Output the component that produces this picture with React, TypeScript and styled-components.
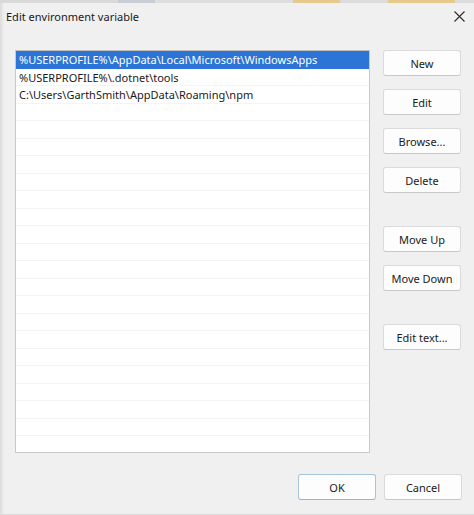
import React from "react";
import styled, { createGlobalStyle } from "styled-components";

const Global = createGlobalStyle`
  html, body { margin: 0; padding: 0; background: #f0f0f0; }
  body { font-family: "Noto Sans", "Open Sans", sans-serif; }
  * { box-sizing: border-box; }
`;

const Screen = styled.div`
  width: 474px;
  height: 515px;
  display: flex;
  flex-direction: column;
  overflow: hidden;
  background: #f0f0f0;
`;

const BackStrip = styled.div`
  height: 3px;
  display: flex;
  background: #d8d8d8;
`;

const StripPart = styled.div<{ $w: number; $c: string }>`
  width: ${(p) => p.$w}px;
  background: ${(p) => p.$c};
`;

const Dialog = styled.div`
  flex: 1;
  display: flex;
  flex-direction: column;
  background: #f0f0f0;
  border-bottom: 1px solid #dcdcdc;
  box-shadow: inset 4px 0 3px -2px rgba(0, 0, 0, 0.09);
`;

const TitleBar = styled.div`
  height: 27px;
  display: flex;
  align-items: center;
  justify-content: space-between;
  padding: 0 9px 0 6px;
`;

const Title = styled.div`
  font-size: 11px;
  color: #1a1a1a;
`;

const CloseIcon = styled.svg`
  width: 11px;
  height: 11px;
  display: block;
`;

const Content = styled.div`
  display: flex;
  padding: 20px 0 0 15px;
  gap: 13px;
`;

const ListBox = styled.div`
  width: 355px;
  height: 403px;
  background: #ffffff;
  border: 1px solid #c9c9c9;
  border-top-color: #bdbdbd;
  overflow: hidden;
`;

const Row = styled.div<{ $selected?: boolean }>`
  height: 17.5px;
  line-height: 17px;
  padding-left: 3px;
  font-size: 11px;
  white-space: nowrap;
  color: ${(p) => (p.$selected ? "#ffffff" : "#1a1a1a")};
  background: ${(p) => (p.$selected ? "#2c74d6" : "transparent")};
  border-bottom: 1px solid ${(p) => (p.$selected ? "#2c74d6" : "#f4f4f4")};
`;

const ButtonColumn = styled.div`
  display: flex;
  flex-direction: column;
  gap: 13px;
`;

const Spacer = styled.div`
  height: 7px;
`;

const Button = styled.button<{ $default?: boolean }>`
  width: 78px;
  height: 26px;
  padding: 0;
  font-family: "Noto Sans", "Open Sans", sans-serif;
  font-size: 11px;
  color: #1b1b1b;
  background: #fdfdfd;
  border: 1px solid ${(p) => (p.$default ? "#a9c4dc" : "#dadada")};
  border-bottom-color: ${(p) => (p.$default ? "#97b6d2" : "#c8c8c8")};
  border-radius: 3px;
  display: flex;
  align-items: center;
  justify-content: center;
`;

const Footer = styled.div`
  display: flex;
  justify-content: flex-end;
  gap: 8px;
  padding: 21px 12px 0 0;
`;

const entries = [
  "%USERPROFILE%\\AppData\\Local\\Microsoft\\WindowsApps",
  "%USERPROFILE%\\.dotnet\\tools",
  "C:\\Users\\GarthSmith\\AppData\\Roaming\\npm",
];

export default function App() {
  const rows = [...entries, ...Array(21).fill("")];
  return (
    <Screen>
      <Global />
      <BackStrip>
        <StripPart $w={118} $c="#d9d9d9" />
        <StripPart $w={37} $c="#c9ced6" />
        <StripPart $w={138} $c="#dedede" />
        <StripPart $w={47} $c="#e6c98c" />
        <StripPart $w={48} $c="#dcdcdc" />
        <StripPart $w={67} $c="#e6c98c" />
        <StripPart $w={19} $c="#dcdcdc" />
      </BackStrip>
      <Dialog>
        <TitleBar>
          <Title>Edit environment variable</Title>
          <CloseIcon viewBox="0 0 11 11">
            <path d="M0.5 0.5 L10.5 10.5 M10.5 0.5 L0.5 10.5" stroke="#2b2b2b" strokeWidth="1.1" fill="none" />
          </CloseIcon>
        </TitleBar>
        <Content>
          <ListBox>
            {rows.map((t, i) => (
              <Row key={i} $selected={i === 0}>
                {t}
              </Row>
            ))}
          </ListBox>
          <ButtonColumn>
            <Button>New</Button>
            <Button>Edit</Button>
            <Button>Browse...</Button>
            <Button>Delete</Button>
            <Spacer />
            <Button>Move Up</Button>
            <Button>Move Down</Button>
            <Spacer />
            <Button>Edit text...</Button>
          </ButtonColumn>
        </Content>
        <Footer>
          <Button $default>OK</Button>
          <Button>Cancel</Button>
        </Footer>
      </Dialog>
    </Screen>
  );
}
